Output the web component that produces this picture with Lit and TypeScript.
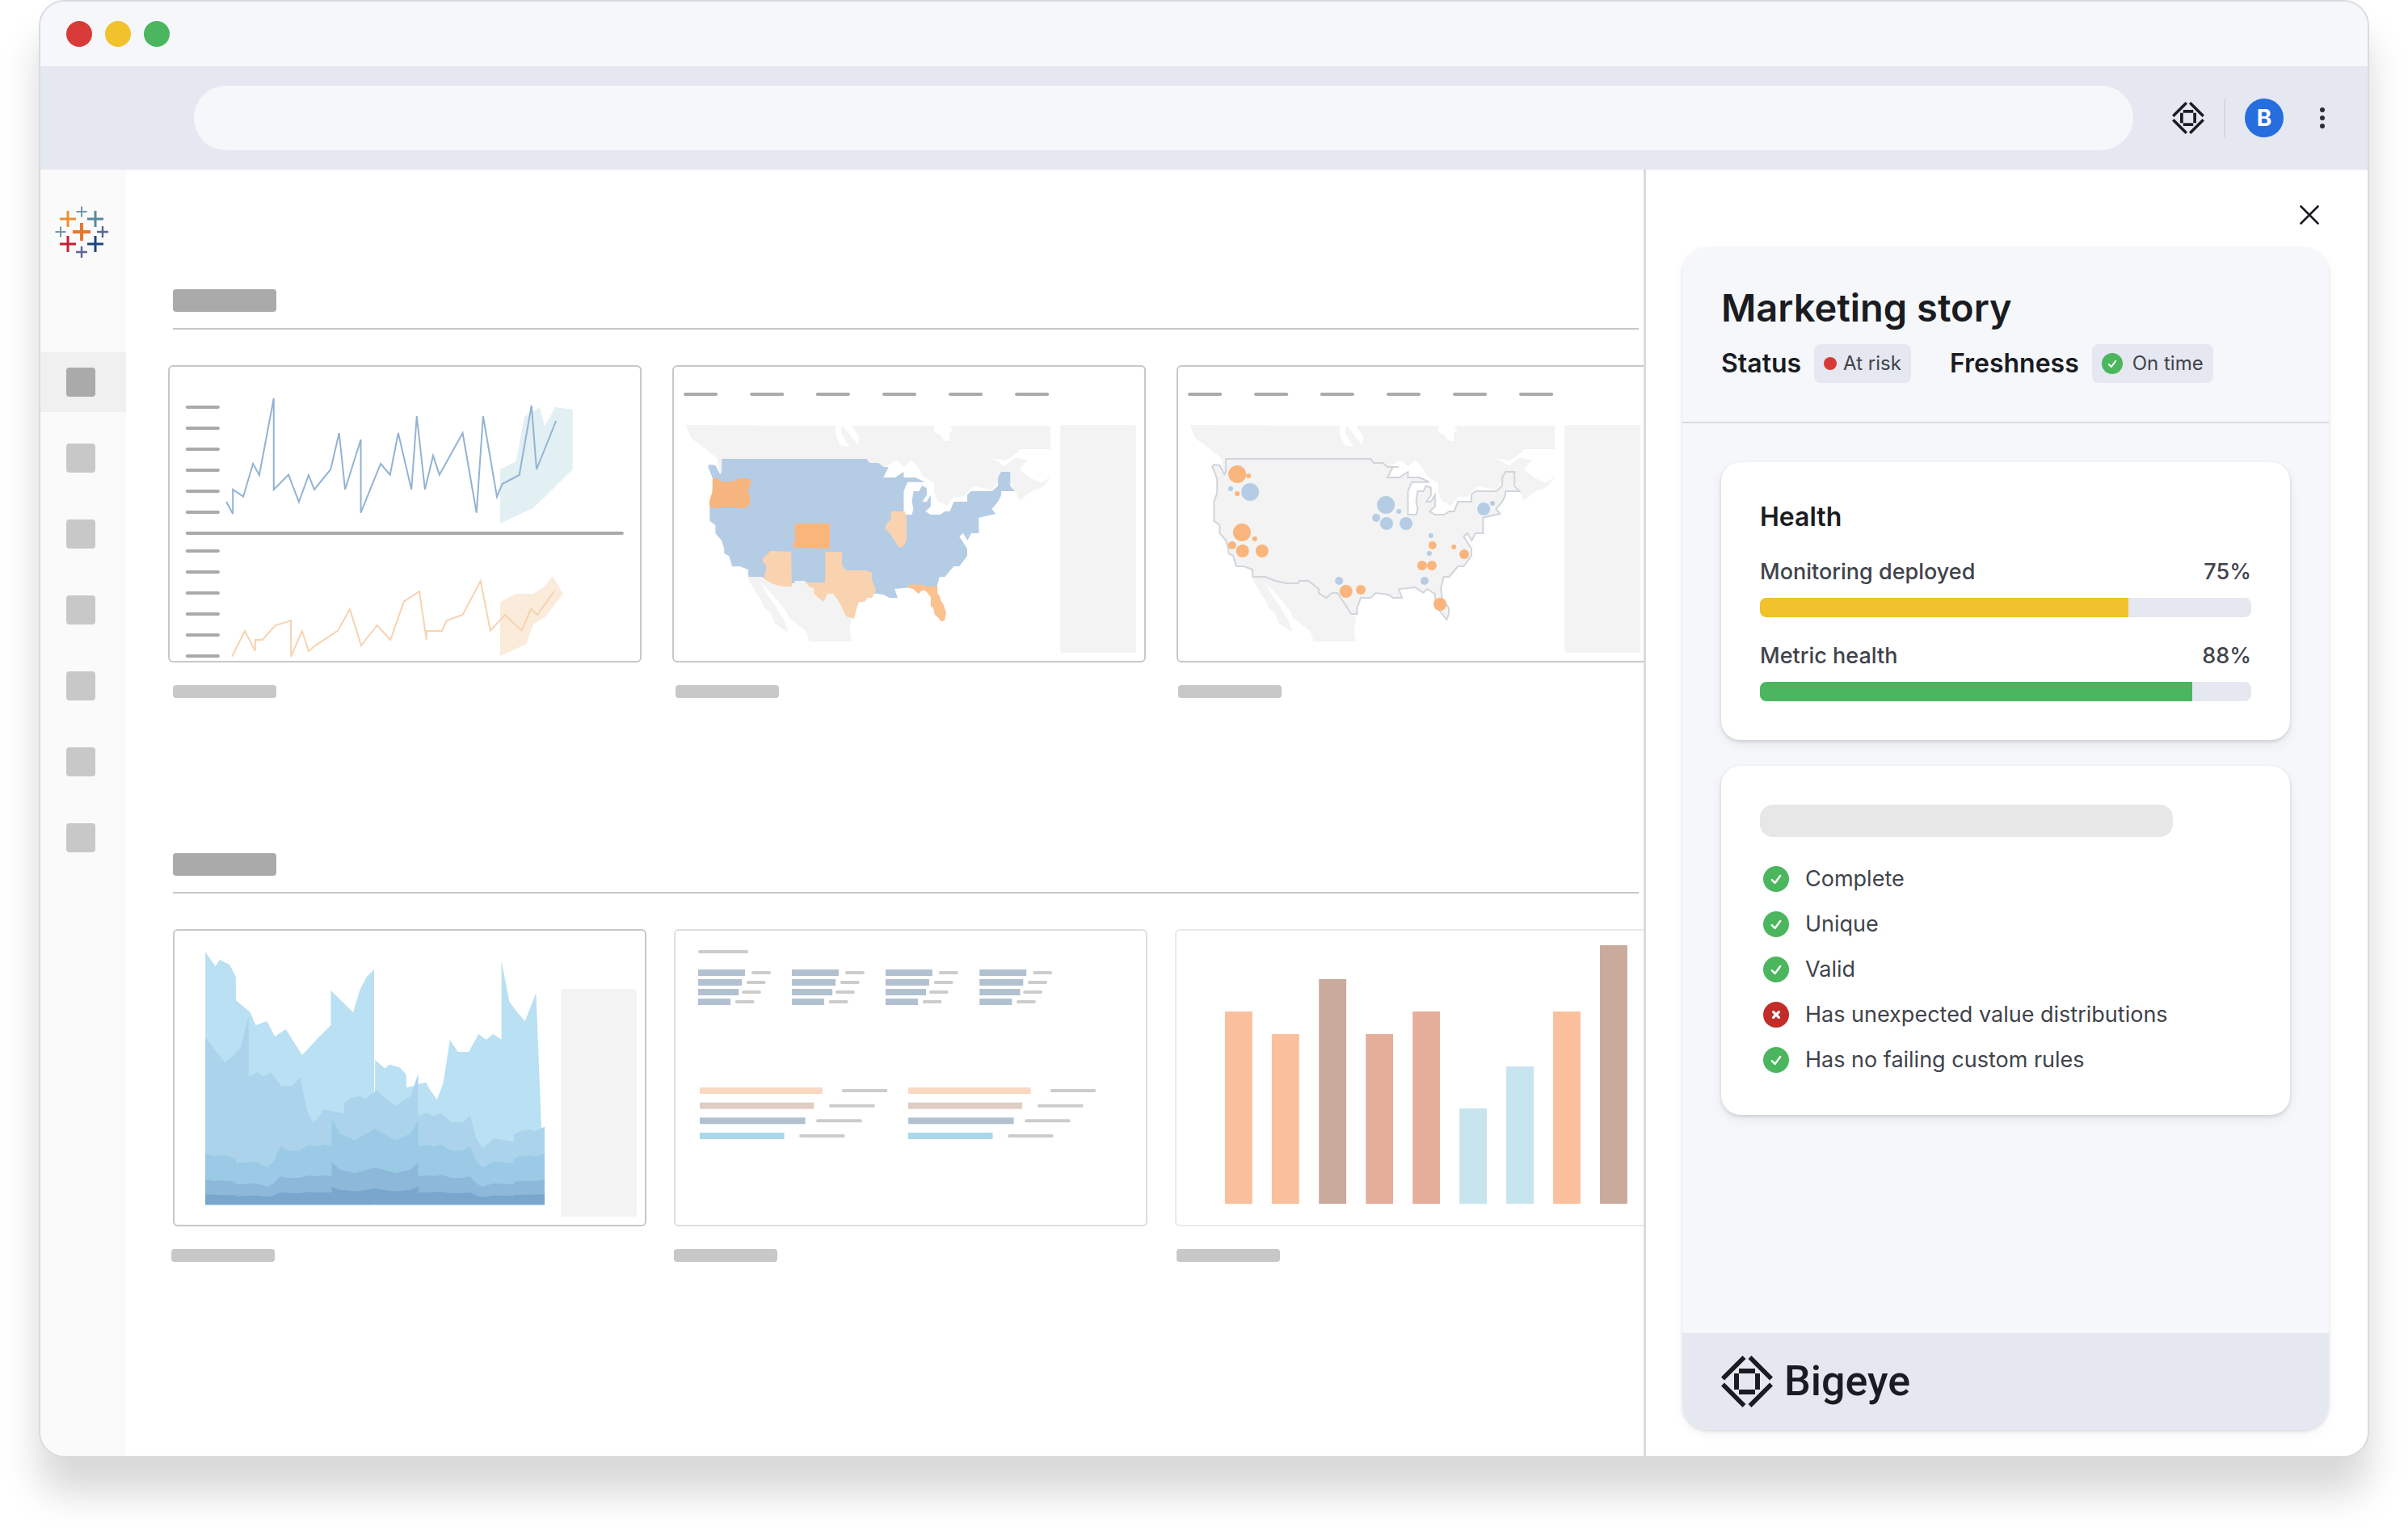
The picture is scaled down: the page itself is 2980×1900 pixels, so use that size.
import { LitElement, html, svg, css } from "lit";
import { customElement, property } from "lit/decorators.js";
import { classMap } from "lit/directives/class-map.js";

type Tone = "orange" | "blue";

const AXIS_TICKS = [192, 270, 348, 426, 504, 582, 726, 804, 882, 960, 1038, 1116];
const MAP_TABS = [67, 278, 488, 699, 910, 1121];

const CANADA =
  "M73 258L550 261 550 294 565 333 593 339 567 285 573 262 621 333 625 303 602 261 864 261 864 285 882 294 898 318 913 318 913 285 925 285 914 261 1234 261 1234 348 1136 348 1120 369 1090 390 1047 381 1089 410 1120 381 1135 381 1161 390 1136 420 1163 450 1203 474 1234 451 1212 486 1170 507 1136 540 1120 500 1105 465 1105 432 1077 432 1067 455 1067 470 1048 498 987 486 955 525 926 525 905 558 874 540 864 507 864 474 830 450 808 408 792 390 768 411 743 390 710 412 702 414 686 399 657 399 648 384 188 384 188 432 183 441 173 381 138 348 92 308Z";
const MEXICO =
  "M264 793L272 795 272 822 325 822 420 837 451 837 483 865 543 880 587 950 602 976 595 1018 601 1062 467 1062 457 1024 401 974 394 952 372 918 315 844 330 882 352 918 388 987 400 1026 388 1021 355 993 344 956 325 938 315 912 298 882 277 840Z";
const USA =
  "M188 384L649 384 658 399 687 399 702 414 719 414 702 453 740 453 767 432 767 453 804 453 835 470 779 470 767 504 767 591 793 591 798 570 793 543 798 504 816 504 825 484 840 492 840 519 826 543 840 543 853 518 853 561 836 579 853 591 883 591 898 579 914 579 926 543 969 543 969 516 982 504 1048 504 1067 484 1067 453 1077 432 1106 432 1106 484 1121 504 1077 504 1077 519 1067 543 1047 570 1060 588 1006 602 1006 660 982 660 970 687 956 660 944 672 969 718 969 744 944 783 926 783 898 822 881 822 872 862 875 900 897 938 897 960 890 981 868 948 855 920 853 886 828 867 816 881 790 861 738 867 748 900 721 900 703 888 665 882 649 900 617 900 605 938 605 960 587 960 543 882 525 882 507 900 483 882 483 867 451 837 422 837 417 846 381 846 345 837 314 822 273 822 273 795 245 783 221 783 211 744 196 735 196 720 188 687 168 660 168 630 150 614 150 543 160 510 160 458 144 411 150 405 168 408 183 441 188 432Z";

const STATES: Array<{ fill: string; d: string }> = [
  { fill: "#f6b57f", d: "M159 456L177 456 183 468 223 468Q236 456 255 456L270 456 281 462 278 490 270 500 278 517 278 546Q275 560 263 567L163 567 149 562 149 540 158 508Z" },
  { fill: "#fab67a", d: "M427 624L532 624 532 717 416 713 416 696 422 687 420 632Z" },
  { fill: "#f9d3b0", d: "M727 579L771 579 776 606 776 684 770 702 758 714 747 706 735 682Q722 654 709 645L709 630 727 606Z" },
  { fill: "#f9d3b0", d: "M342 726L409 729 411 858 385 858Q355 855 324 831L324 813 329 804 329 777 319 768 319 754 326 743 337 735Z" },
  { fill: "#f9d3b0", d: "M517 729L571 729 571 780 584 798 648 798 666 807 666 834 679 870 666 900 652 900 642 915 625 915 618 936 609 978 584 969 562 915 543 885 525 885 512 915 496 900 481 883 481 865 466 858 455 843 517 843Z" },
  { fill: "#fbc18e", d: "M779 852L819 850 834 856 874 857 874 882 882 894 885 910 893 925 902 955 898 982 892 987 885 986 878 975 866 963 861 938 853 930 853 897 836 873 825 873 814 885 797 867 783 863Z" },
];

const BUBBLES: Array<[number, number, number, Tone]> = [
  [224, 441, 11, "orange"], [260, 447, 3, "orange"], [203, 495, 3, "blue"], [265, 507, 11, "blue"],
  [224, 513, 3, "orange"], [697, 555, 11, "blue"], [738, 579, 3, "blue"], [666, 603, 5, "blue"],
  [699, 624, 8, "blue"], [761, 624, 8, "blue"], [1008, 570, 8, "blue"], [1036, 549, 3, "blue"],
  [239, 657, 11, "orange"], [280, 681, 3, "orange"], [208, 705, 5, "orange"], [241, 726, 8, "orange"],
  [303, 726, 8, "orange"], [840, 669, 3, "blue"], [845, 705, 5, "orange"], [913, 711, 3, "orange"],
  [946, 738, 6, "orange"], [835, 735, 3, "blue"], [812, 780, 6, "orange"], [843, 780, 6, "orange"],
  [820, 837, 5, "blue"], [548, 837, 5, "blue"], [570, 876, 8, "orange"], [617, 870, 6, "orange"],
  [869, 924, 8, "orange"],
];

const AREAS: Array<{ fill: string; points: string }> = [
  { fill: "#b9e0f3", points: "139,115 171,168 185,144 216,162 236,208 236,294 282,339 299,387 335,372 360,429 395,402 447,498 502,429 538,388 538,258 609,339 631,255 652,208 676,180 676,1056 139,1056" },
  { fill: "#b9e0f3", points: "679,516 710,547 725,533 756,543 778,570 778,619 803,612 816,606 841,599 852,624 876,664 896,600 917,441 942,486 977,486 1008,420 1033,441 1054,420 1081,440 1081,148 1106,299 1131,339 1156,372 1191,267 1208,769 1218,765 1218,1056 679,1056" },
  { fill: "#abd4ec", points: "139,432 201,525 226,502 251,470 277,352 277,577 304,562 324,577 349,562 380,613 416,613 441,578 461,700 482,750 500,726 516,700 580,715 580,678 601,657 632,650 647,660 679,634 679,625 742,687 769,668 792,650 816,568 816,724 843,713 865,724 890,713 921,748 956,748 981,724 1001,808 1021,844 1056,808 1120,820 1120,793 1140,780 1174,774 1187,781 1218,765 1218,1053 139,1053" },
  { fill: "#9bcae6", points: "139,864 170,874 185,870 217,874 236,883 236,900 299,893 336,915 356,893 377,837 402,853 438,853 468,830 493,838 516,830 541,837 541,735 567,789 590,803 615,814 679,771 742,814 792,789 816,738 816,838 843,830 865,837 890,830 921,853 956,853 981,837 1001,893 1021,915 1056,893 1120,900 1120,883 1140,874 1174,870 1187,874 1218,864 1218,1053 139,1053" },
  { fill: "#8db8da", points: "139,960 170,966 185,963 217,965 236,970 236,978 300,974 336,986 356,974 377,948 402,954 438,954 468,944 493,948 516,944 541,948 541,897 567,923 615,936 679,915 742,936 792,923 816,898 816,947 843,944 865,947 890,943 921,954 956,954 981,948 1001,975 1021,986 1056,974 1120,978 1120,970 1140,965 1187,966 1218,960 1218,1053 139,1053" },
  { fill: "#78a6cd", points: "139,1014 170,1017 236,1018 236,1022 300,1019 336,1024 356,1020 377,1008 438,1011 468,1006 493,1008 541,1008 541,987 567,998 615,1004 679,994 742,1004 792,998 816,987 816,1008 890,1006 921,1011 956,1011 981,1008 1001,1019 1021,1025 1056,1019 1120,1021 1120,1017 1187,1016 1218,1014 1218,1053 139,1053" },
];

const COLUMNS: Array<[number, number, string]> = [
  [195, 336, "#fac09e"], [344, 420, "#fac09e"], [494, 216, "#c9aa9d"],
  [643, 420, "#e5ae9b"], [792, 336, "#e5ae9b"], [941, 696, "#c7e4ef"],
  [1090, 540, "#c7e4ef"], [1239, 336, "#fac09e"], [1388, 90, "#c9aa9d"],
];

const rule = (x: number, y: number, w: number, fill: string) =>
  svg`<rect x=${x} y=${y - 6} width=${w} height="12" rx="5" fill=${fill}></rect>`;

const trendChart = () => html`
  <svg class="plot" viewBox="26 42 1496 1092" preserveAspectRatio="none" aria-hidden="true">
    ${AXIS_TICKS.map((y) => rule(77, y, 108, "#aaaaaa"))} ${rule(77, 660, 1393, "#aaaaaa")}
    <polygon fill="#e2f0f4" points="1077,423 1128,393 1154,228 1203,192 1219,264 1252,192 1308,201 1308,423 1182,567 1077,624"></polygon>
    <polyline class="trace" stroke="#93b3d3" points="206,543 227,588 227,498 260,524 291,402 311,444 357,159 357,498 404,443 437,544 468,444 486,498 538,423 565,288 584,498 634,312 634,584 697,402 727,443 753,288 795,498 812,225 838,498 864,372 884,443 958,288 1002,584 1023,225 1067,525 1084,477 1138,444 1177,186 1193,423 1255,243"></polyline>
    <polygon fill="#faebda" points="1077,915 1128,885 1183,885 1219,857 1244,820 1278,885 1219,972 1182,998 1160,1072 1077,1116"></polygon>
    <polyline class="trace" stroke="#f6d3b1" points="224,1118 265,1023 298,1097 298,1056 321,1056 362,1002 412,984 412,1118 447,1023 468,1098 488,1078 561,1022 599,942 635,1077 686,1002 728,1056 771,914 820,876 843,1056 843,1023 892,1023 907,984 958,963 1015,837 1046,1022 1092,963 1146,1022 1175,942 1196,963 1249,876"></polyline>
  </svg>`;

const mapBase = () => svg`
  ${MAP_TABS.map((x) => rule(x, 144, 108, "#aaaaaa"))}
  <rect x="1265" y="258" width="241" height="846" rx="10" fill="#f3f3f3"></rect>
  <path fill="#f3f3f3" d=${CANADA}></path>
  <path fill="#f3f3f3" d=${MEXICO}></path>`;

const regionMap = () => html`
  <svg class="plot" viewBox="36 42 1496 1092" preserveAspectRatio="none" aria-hidden="true">
    ${mapBase()}
    <path fill="#b5cce5" d=${USA}></path>
    ${STATES.map((s) => svg`<path fill=${s.fill} d=${s.d}></path>`)}
  </svg>`;

const bubbleMap = () => html`
  <svg class="plot" viewBox="36 42 1496 1092" preserveAspectRatio="none" aria-hidden="true">
    ${mapBase()}
    <path class="trace" fill="none" stroke="#d0d5db" d="M700 414L737 414"></path>
    <path class="coast" fill="#f3f3f3" stroke="#d0d5db" d=${USA}></path>
    ${BUBBLES.map(
      ([x, y, r, tone]) =>
        svg`<ellipse cx=${x} cy=${y} rx=${r * 2.57} ry=${r * 3} fill=${tone === "orange" ? "#f9b57c" : "#b5cce5"}></ellipse>`
    )}
  </svg>`;

const areaChart = () => html`
  <svg class="plot" viewBox="41 36 1496 1092" preserveAspectRatio="none" aria-hidden="true">
    ${AREAS.map((a) => svg`<polygon fill=${a.fill} points=${a.points}></polygon>`)}
    <rect x="1270" y="252" width="241" height="846" rx="10" fill="#f3f3f3"></rect>
  </svg>`;

const MINI_ROWS = [
  [192, 149, 170], [228, 139, 154], [264, 129, 139], [300, 103, 118],
];
const WIDE_ROWS: Array<[number, number, number, string]> = [
  [630, 390, 452, "#fad9c2"], [686, 363, 412, "#dfccc4"],
  [742, 336, 371, "#b2c1d0"], [798, 269, 317, "#aad7e9"],
];

const barTable = () => html`
  <svg class="plot" viewBox="41 36 1496 1092" preserveAspectRatio="none" aria-hidden="true">
    ${rule(113, 114, 159, "#cccccc")}
    ${[113, 411, 709, 1008].map((x) =>
      MINI_ROWS.map(
        ([y, w, dx]) => svg`<rect x=${x} y=${y - 12} width=${w} height="24" fill="#b2c1d0"></rect>${rule(x + dx, y, 61, "#cccccc")}`
      )
    )}
    ${[118, 781].map((x) =>
      WIDE_ROWS.map(
        ([y, w, dx, fill]) => svg`<rect x=${x} y=${y - 12} width=${w} height="24" fill=${fill}></rect>${rule(x + dx, y, 145, "#cccccc")}`
      )
    )}
  </svg>`;

const columnChart = () => html`
  <svg class="plot" viewBox="41 36 1496 1092" preserveAspectRatio="none" aria-hidden="true">
    ${COLUMNS.map(([x, y, fill]) => svg`<rect x=${x} y=${y} width="87" height=${1050 - y} fill=${fill}></rect>`)}
  </svg>`;

const bigeyeMark = (size: number) => html`
  <svg width=${size} height=${size} viewBox="0 0 64 64" aria-hidden="true">
    <path d="M2 28.5L28.5 2M35.5 2L62 28.5M62 35.5L35.5 62M28.5 62L2 35.5" fill="none" stroke="#1a1c21" stroke-width="5.6"></path>
    <path d="M22 16h20v6H22zM16 22h6v20h-6zM42 22h6v20h-6zM22 42h20v6H22z" fill="#1a1c21"></path>
  </svg>`;

const statusIcon = (ok: boolean, size: number) => html`
  <svg width=${size} height=${size} viewBox="0 0 32 32" aria-hidden="true">
    <circle cx="16" cy="16" r="16" fill=${ok ? "#4bb65e" : "#c12d29"}></circle>
    ${ok
      ? svg`<path d="M10.8 17.2L14.6 21 21.2 12" fill="none" stroke="#fff" stroke-width="2.4" stroke-linecap="round" stroke-linejoin="round"></path>`
      : svg`<path d="M12.6 12.6L19.4 19.4M19.4 12.6L12.6 19.4" fill="none" stroke="#fff" stroke-width="3.2" stroke-linecap="round"></path>`}
  </svg>`;

const plus = (x: number, y: number, size: number, weight: number, color: string) =>
  svg`<path d="M${x - size / 2} ${y}h${size}M${x} ${y - size / 2}v${size}" stroke=${color} stroke-width=${weight}></path>`;

@customElement("dashboard-shelf")
class DashboardShelf extends LitElement {
  @property({ attribute: false }) cards: Array<{ art: unknown; tone: string }> = [];
  @property({ type: Boolean, reflect: true }) inset = false;

  static styles = css`
    :host { display: block; }
    .heading { width: 128px; height: 28px; border-radius: 4px; background: #aaaaaa; margin: 0 0 20px 6px; }
    .rule { height: 2px; border: 0; background: #c8c8c8; margin: 0 6px 44px; }
    .cards { display: flex; gap: 38px; }
    .captions { display: flex; gap: 494px; padding-left: 6px; margin-top: 28px; }
    :host([inset]) .cards { gap: 34px; padding-left: 6px; }
    :host([inset]) .captions { padding-left: 4px; }
    .card { flex: none; box-sizing: border-box; width: 586px; height: 368px; border: 2px solid #c8c8c8; border-radius: 6px; overflow: hidden; background: #fff; }
    .card.soft { border-color: #dedede; }
    .card.faint { border-color: #e9e9e9; }
    .caption { flex: none; width: 128px; height: 16px; border-radius: 4px; background: #c8c8c8; }
    .plot { display: block; width: 100%; height: 100%; }
    .trace, .coast { stroke-width: 2px; vector-effect: non-scaling-stroke; }
    .trace { fill: none; }
  `;

  render() {
    return html`
      <div class="heading"></div>
      <hr class="rule" />
      <div class="cards">
        ${this.cards.map(
          (c) => html`<div class=${classMap({ card: true, [c.tone]: true })}>${c.art}</div>`
        )}
      </div>
      <div class="captions">${this.cards.map(() => html`<span class="caption"></span>`)}</div>
    `;
  }
}

@customElement("story-panel")
class StoryPanel extends LitElement {
  private meters = [
    { id: "monitoring", label: "Monitoring deployed", value: 75, color: "#f1c22c" },
    { id: "metric", label: "Metric health", value: 88, color: "#4bb65e" },
  ];
  private checks = [
    { label: "Complete", ok: true },
    { label: "Unique", ok: true },
    { label: "Valid", ok: true },
    { label: "Has unexpected value distributions", ok: false },
    { label: "Has no failing custom rules", ok: true },
  ];

  static styles = css`
    :host { display: flex; flex-direction: column; box-sizing: border-box; gap: 16px; padding: 32px 48px 32px 45px; border-left: 3px solid #d8dbe0; background: #fff; }
    .close { align-self: flex-end; width: 48px; height: 48px; padding: 12px; border: 0; background: none; cursor: pointer; }
    .close svg { display: block; }
    .sheet { flex: 1; display: flex; flex-direction: column; border-radius: 32px; background: #f5f7fb; overflow: hidden; box-shadow: 0 2px 4px rgba(0, 0, 0, 0.12), 0 6px 16px rgba(0, 0, 0, 0.04); }
    .head { padding: 45px 48px 48px; border-bottom: 2px solid #d8dbe0; }
    h2 { margin: 0 0 15px; font-size: 47px; line-height: 60px; font-weight: 600; color: #1a1c21; }
    .facts { display: flex; flex-wrap: wrap; gap: 48px; }
    .fact { display: flex; align-items: center; gap: 16px; font-size: 32px; line-height: 40px; font-weight: 600; color: #1a1c21; }
    .badge { display: flex; align-items: center; gap: 8px; height: 48px; padding: 0 12px; border-radius: 8px; background: #e5e8f0; font-size: 24px; line-height: 32px; font-weight: 400; color: #40434b; }
    .badge.wide { gap: 12px; }
    .dot { width: 16px; height: 16px; border-radius: 50%; background: #d83b37; }
    .body { flex: 1; display: flex; flex-direction: column; gap: 32px; padding: 48px; }
    .box { padding: 48px; border-radius: 24px; background: #fff; box-shadow: 0 2px 4px rgba(16, 24, 32, 0.14), 0 6px 16px rgba(16, 24, 32, 0.06); }
    h3 { margin: 0; font-size: 32px; line-height: 40px; font-weight: 600; color: #1a1c21; }
    .meter { margin-top: 28px; }
    .meter-row { display: flex; justify-content: space-between; margin-bottom: 12px; font-size: 27px; line-height: 40px; font-weight: 500; color: #40434b; }
    .track { height: 24px; border-radius: 8px; background: #e5e8f0; overflow: hidden; }
    .fill { height: 100%; }
    .skeleton { width: 84%; height: 40px; border-radius: 16px; background: #e7e7e7; }
    ul { display: flex; flex-direction: column; gap: 16px; margin: 32px 0 0; padding: 0 0 0 4px; list-style: none; }
    li { display: flex; align-items: center; gap: 20px; font-size: 27px; line-height: 40px; color: #40434b; }
    .foot { display: flex; align-items: center; gap: 14px; height: 120px; padding: 0 48px; background: #e5e8f0; }
    .wordmark { font-family: Roboto, "Liberation Sans", sans-serif; font-size: 52px; line-height: 64px; font-weight: 500; color: #1a1c21; }
  `;

  render() {
    return html`
      <button class="close" aria-label="Close">
        <svg width="24" height="24" viewBox="0 0 24 24" aria-hidden="true">
          <path d="M1.5 1.5L22.5 22.5M22.5 1.5L1.5 22.5" stroke="#1a1c21" stroke-width="2.6" stroke-linecap="round"></path>
        </svg>
      </button>
      <article class="sheet">
        <header class="head">
          <h2>Marketing story</h2>
          <div class="facts">
            <div class="fact">Status <span class="badge"><i class="dot"></i>At risk</span></div>
            <div class="fact">Freshness <span class="badge wide">${statusIcon(true, 26)}On time</span></div>
          </div>
        </header>
        <div class="body">
          <section class="box">
            <h3>Health</h3>
            ${this.meters.map(
              (m) => html`
                <div class="meter">
                  <div class="meter-row"><span id=${m.id}>${m.label}</span><span>${m.value}%</span></div>
                  <div class="track" role="progressbar" aria-labelledby=${m.id} aria-valuenow=${m.value}>
                    <div class="fill" style="width:${m.value}%;background:${m.color}"></div>
                  </div>
                </div>`
            )}
          </section>
          <section class="box">
            <div class="skeleton"></div>
            <ul>
              ${this.checks.map((c) => html`<li>${statusIcon(c.ok, 32)}<span>${c.label}</span></li>`)}
            </ul>
          </section>
        </div>
        <footer class="foot">${bigeyeMark(64)}<span class="wordmark">Bigeye</span></footer>
      </article>
    `;
  }
}

@customElement("app-root")
class AppRoot extends LitElement {
  private shelves = [
    {
      inset: false,
      cards: [
        { art: trendChart(), tone: "solid" },
        { art: regionMap(), tone: "solid" },
        { art: bubbleMap(), tone: "solid" },
      ],
    },
    {
      inset: true,
      cards: [
        { art: areaChart(), tone: "solid" },
        { art: barTable(), tone: "soft" },
        { art: columnChart(), tone: "faint" },
      ],
    },
  ];
  private links = ["Home", "Explore", "Favorites", "Recents", "Shared", "Collections", "Settings"];

  static styles = css`
    :host { display: block; overflow: hidden; background: #fff; font-family: Inter, "Liberation Sans", sans-serif; }
    .window { display: flex; flex-direction: column; box-sizing: border-box; min-height: calc(100vh - 96px); margin: 0 48px 96px; border: 2px solid #d8dce1; border-radius: 32px; background: #fff; box-shadow: 0 44px 48px rgba(0, 0, 0, 0.155); }
    .titlebar { display: flex; align-items: center; gap: 16px; height: 80px; padding: 0 32px; border-radius: 30px 30px 0 0; background: #f5f7fb; }
    .light { width: 32px; height: 32px; padding: 0; border: 0; border-radius: 50%; }
    .red { background: #d83b37; }
    .yellow { background: #f1c22c; }
    .green { background: #4bb65e; }
    .toolbar { display: flex; align-items: center; gap: 24px; height: 128px; padding: 0 32px 0 190px; background: #e5e8f0; }
    .address { flex: 1; min-width: 0; height: 80px; box-sizing: border-box; margin-right: 24px; padding: 0 40px; border: 0; border-radius: 40px; background: #f5f7fb; font: inherit; font-size: 28px; }
    .tool { display: flex; padding: 0; border: 0; background: none; cursor: pointer; }
    .sep { width: 2px; height: 48px; background: #d6d9dd; }
    .avatar { width: 48px; height: 48px; padding: 0; border: 0; border-radius: 50%; background: #266edf; color: #fff; font: inherit; font-size: 28px; line-height: 48px; font-weight: 700; cursor: pointer; }
    .content { flex: 1; display: flex; }
    .sidebar { flex: none; width: 106px; border-radius: 0 0 0 30px; background: #fafafa; }
    .logo { display: block; height: 66px; padding: 44px 0 116px 18px; }
    .nav { display: flex; flex-direction: column; gap: 20px; }
    .link { display: block; padding: 19px 32px; }
    .link::before { content: ""; display: block; width: 36px; height: 36px; border-radius: 4px; background: #c8c8c8; }
    .link.active { background: #f0f0f0; }
    .link.active::before { background: #aaaaaa; }
    .main { flex: 1; min-width: 0; display: flex; flex-direction: column; gap: 192px; padding: 148px 0 0 52px; overflow: hidden; }
    .panel { flex: none; width: 896px; border-radius: 0 0 30px 0; }
  `;

  render() {
    return html`
      <div class="window">
        <header class="titlebar">
          <button class="light red" aria-label="Close window"></button>
          <button class="light yellow" aria-label="Minimize window"></button>
          <button class="light green" aria-label="Zoom window"></button>
        </header>
        <div class="toolbar">
          <input class="address" type="text" aria-label="Address" />
          <button class="tool" aria-label="Bigeye extension">${bigeyeMark(40)}</button>
          <span class="sep"></span>
          <button class="avatar" aria-label="Account B">B</button>
          <button class="tool" aria-label="Menu">
            <svg width="48" height="48" viewBox="0 0 48 48" fill="#2b2d33" aria-hidden="true">
              <circle cx="24" cy="14" r="3"></circle><circle cx="24" cy="24" r="3"></circle><circle cx="24" cy="34" r="3"></circle>
            </svg>
          </button>
        </div>
        <div class="content">
          <aside class="sidebar">
            <a class="logo" href="#home" aria-label="Home page">
              <svg width="66" height="66" viewBox="0 0 66 66" fill="none" aria-hidden="true">
                ${plus(33, 33, 22, 4, "#e8762d")} ${plus(16, 17, 20, 3, "#eb912c")}
                ${plus(50, 17, 20, 3, "#59879b")} ${plus(16, 48, 20, 3, "#c72035")}
                ${plus(50, 48, 20, 3, "#1c447f")} ${plus(33, 8, 13, 2, "#7099a6")}
                ${plus(7, 33, 13, 2, "#7099a6")} ${plus(59, 33, 14, 2.4, "#5b6591")}
                ${plus(33, 58, 14, 2.4, "#5b6591")}
              </svg>
            </a>
            <nav class="nav">
              ${this.links.map(
                (name, i) => html`<a class=${classMap({ link: true, active: i === 0 })} href="#${name.toLowerCase()}" aria-label=${name}></a>`
              )}
            </nav>
          </aside>
          <main class="main">
            ${this.shelves.map((s) => html`<dashboard-shelf .cards=${s.cards} ?inset=${s.inset}></dashboard-shelf>`)}
          </main>
          <story-panel class="panel"></story-panel>
        </div>
      </div>
    `;
  }
}
